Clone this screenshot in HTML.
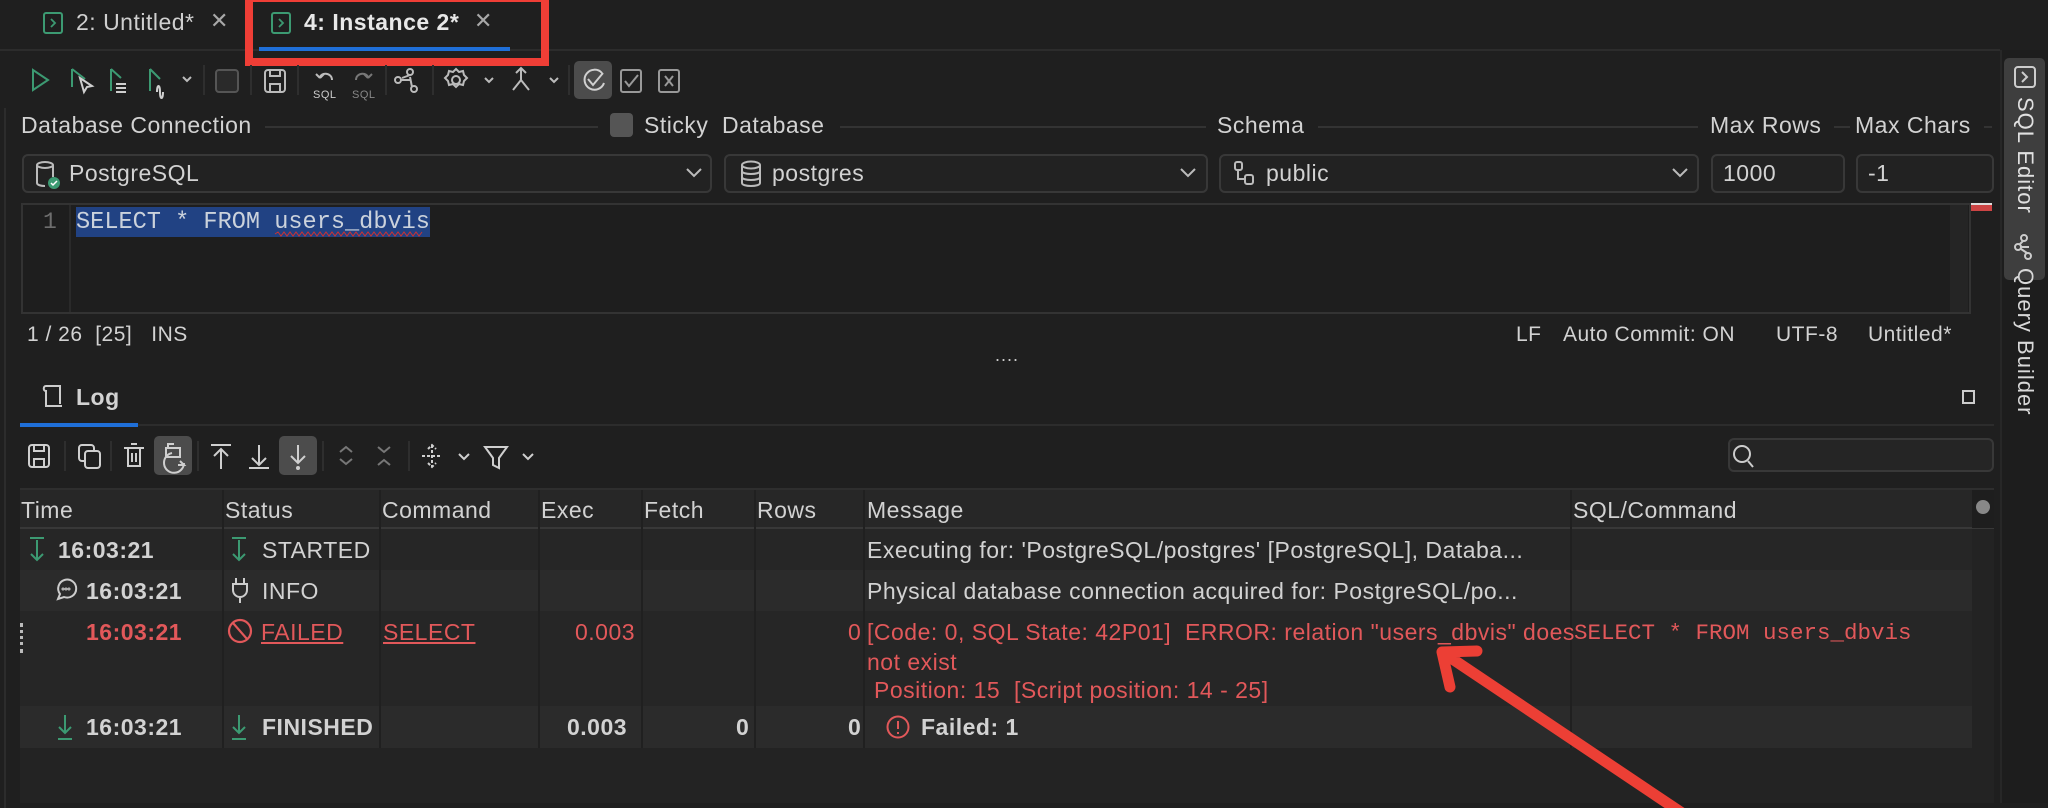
<!DOCTYPE html>
<html><head><meta charset="utf-8"><style>
*{margin:0;padding:0;box-sizing:border-box}
body{width:2048px;height:803px;background:#1f1f1f;overflow:hidden;position:relative;font-family:"Liberation Sans",sans-serif;color:#d2d2d2;font-size:23px;letter-spacing:0.5px}
.a{position:absolute;white-space:nowrap}
.mono{font-family:"Liberation Mono",monospace;letter-spacing:0}
svg{position:absolute;overflow:visible}
.b{font-weight:bold}
.red{color:#e2585a}
.u{text-decoration:underline}
.ln{position:absolute;height:2px;background:#333}
.box{position:absolute;border:2px solid #383838;border-radius:6px;background:#222}
.hl{position:absolute;background:#4c4c4c;border-radius:5px}
.sep{position:absolute;width:2px;height:30px;background:#2e2e2e}
</style></head><body>

<!-- tabs -->
<div class="ln" style="left:0;top:49px;width:2000px;background:#2c2c2c"></div>
<svg style="left:43px;top:12px" width="20" height="22"><rect x="1" y="1" width="18" height="20" rx="2" fill="none" stroke="#3c9a72" stroke-width="2"/><path d="M8 7l4 4-4 4" fill="none" stroke="#3c9a72" stroke-width="1.8"/></svg>
<div class="a" style="left:76px;top:9px;color:#cfcfcf">2: Untitled*</div>
<div class="a" style="left:210px;top:8px;font-size:22px;color:#a8a8a8">✕</div>
<svg style="left:271px;top:12px" width="20" height="22"><rect x="1" y="1" width="18" height="20" rx="2" fill="none" stroke="#3c9a72" stroke-width="2"/><path d="M8 7l4 4-4 4" fill="none" stroke="#3c9a72" stroke-width="1.8"/></svg>
<div class="a b" style="left:304px;top:9px;color:#e8e8e8">4: Instance 2*</div>
<div class="a" style="left:474px;top:8px;font-size:22px;color:#a8a8a8">✕</div>
<div class="a" style="left:259px;top:47px;width:251px;height:4px;background:#1f6fd8"></div>
<div class="a" style="left:245px;top:-6px;width:304px;height:72px;border:8px solid #ef3e36"></div>

<!-- toolbar -->
<svg style="left:0;top:60px" width="700" height="40" fill="none" stroke="#3c9a72" stroke-width="2">
<path d="M33 10v20l15-10z"/>
<path d="M72 9v18M72 9l13 10"/><path d="M80 18l4 14 3-5 5-1z" stroke="#cfcfcf"/>
<path d="M111 9v22M111 9l10 9"/><path d="M116 24h10M116 28h10M116 32h10" stroke="#cfcfcf"/>
<path d="M150 9v22M150 9l10 10"/><path d="M157 32c0-8 3-8 3 0s3 8 3 0" stroke="#cfcfcf"/>
<g stroke="#bbb"><path d="M183 17l4 4 4-4"/>
<rect x="216" y="10" width="22" height="22" rx="3" stroke="#555" fill="#2a2a2a"/>
<rect x="265" y="10" width="20" height="22" rx="3"/><path d="M270 10v6h10v-6M270 32v-8h10v8"/>
<path d="M320 18c0-6 12-6 12 2M320 18l-4-4M320 18l4-4"/><text x="313" y="38" font-size="11" fill="#ccc" stroke="none" font-family="Liberation Sans">SQL</text>
<g stroke="#777"><path d="M368 18c0-6-12-6-12 2M368 18l4-4M368 18l-4-4"/><text x="352" y="38" font-size="11" fill="#888" stroke="none" font-family="Liberation Sans">SQL</text></g>
<circle cx="410" cy="12" r="3"/><circle cx="398" cy="20" r="3"/><circle cx="414" cy="29" r="3"/><path d="M401 20h10M410 15l-8 3M412 27l-2-10"/>
<circle cx="456" cy="20" r="4"/><path d="M456 9l3 3 4-1 1 4 3 3-3 3-1 4-4-1-3 3-3-3-4 1-1-4-3-3 3-3 1-4 4 1z"/>
<path d="M485 18l4 4 4-4"/>
<path d="M521 8v12l-8 10M521 20l8 10M516 13l5-5 5 5"/>
<path d="M550 18l4 4 4-4"/></g>
</svg>
<div class="hl" style="left:574px;top:61px;width:38px;height:38px"></div>
<svg style="left:574px;top:61px" width="120" height="40" fill="none" stroke="#d0d0d0" stroke-width="2"><path d="M28 12a10 10 0 1 0 2 10"/><path d="M14 18l5 6 10-12"/>
<g stroke="#999"><rect x="47" y="9" width="20" height="22" rx="2"/><path d="M51 20l4 5 9-11"/><rect x="85" y="9" width="20" height="22" rx="2"/><path d="M91 15l8 10M99 15l-8 10"/></g></svg>
<div class="sep" style="left:203px;top:65px"></div><div class="sep" style="left:250px;top:65px"></div><div class="sep" style="left:297px;top:65px"></div><div class="sep" style="left:385px;top:65px"></div><div class="sep" style="left:432px;top:65px"></div><div class="sep" style="left:568px;top:65px"></div>

<div class="a" style="left:4px;top:108px;width:2px;height:700px;background:#2c2c2c"></div>

<!-- labels -->
<div class="a" style="left:21px;top:112px">Database Connection</div>
<div class="ln" style="left:265px;top:126px;width:333px"></div>
<div class="a" style="left:610px;top:113px;width:23px;height:24px;background:#555;border-radius:4px"></div>
<div class="a" style="left:644px;top:112px">Sticky</div>
<div class="a" style="left:722px;top:112px">Database</div>
<div class="ln" style="left:840px;top:126px;width:366px"></div>
<div class="a" style="left:1217px;top:112px">Schema</div>
<div class="ln" style="left:1318px;top:126px;width:380px"></div>
<div class="a" style="left:1710px;top:112px">Max Rows</div>
<div class="ln" style="left:1834px;top:126px;width:16px"></div>
<div class="a" style="left:1855px;top:112px">Max Chars</div>
<div class="ln" style="left:1984px;top:126px;width:8px"></div>

<!-- combos -->
<div class="box" style="left:22px;top:154px;width:690px;height:39px"></div>
<svg style="left:34px;top:160px" width="26" height="30" fill="none" stroke="#bbb" stroke-width="2"><ellipse cx="11" cy="5" rx="8" ry="3"/><path d="M3 5v18c0 2 4 3 8 3M19 5v12"/><circle cx="20" cy="23" r="6" fill="#3c9a72" stroke="none"/><path d="M17 23l2 2 4-4" stroke="#fff" stroke-width="1.5"/></svg>
<div class="a" style="left:69px;top:160px">PostgreSQL</div>
<svg style="left:686px;top:168px" width="16" height="10" fill="none" stroke="#bbb" stroke-width="2"><path d="M1 1l7 7 7-7"/></svg>
<div class="box" style="left:724px;top:154px;width:484px;height:39px"></div>
<svg style="left:740px;top:160px" width="22" height="28" fill="none" stroke="#bbb" stroke-width="2"><ellipse cx="11" cy="5" rx="9" ry="3.5"/><path d="M2 5v18c0 4 18 4 18 0V5M2 11c0 4 18 4 18 0M2 17c0 4 18 4 18 0"/></svg>
<div class="a" style="left:772px;top:160px">postgres</div>
<svg style="left:1180px;top:168px" width="16" height="10" fill="none" stroke="#bbb" stroke-width="2"><path d="M1 1l7 7 7-7"/></svg>
<div class="box" style="left:1219px;top:154px;width:480px;height:39px"></div>
<svg style="left:1233px;top:161px" width="24" height="26" fill="none" stroke="#bbb" stroke-width="2"><rect x="2" y="1" width="7" height="8" rx="2"/><rect x="12" y="14" width="8" height="9" rx="2"/><path d="M5 9v9h7"/></svg>
<div class="a" style="left:1266px;top:160px">public</div>
<svg style="left:1672px;top:168px" width="16" height="10" fill="none" stroke="#bbb" stroke-width="2"><path d="M1 1l7 7 7-7"/></svg>
<div class="box" style="left:1711px;top:154px;width:134px;height:39px"></div>
<div class="a" style="left:1723px;top:160px">1000</div>
<div class="box" style="left:1856px;top:154px;width:138px;height:39px"></div>
<div class="a" style="left:1868px;top:160px">-1</div>

<!-- editor -->
<div class="a" style="left:21px;top:203px;width:1950px;height:111px;border:2px solid #333;background:#1e1e1e"></div>
<div class="a" style="left:69px;top:205px;width:2px;height:107px;background:#2a2a2a"></div>
<div class="a" style="left:1950px;top:205px;width:18px;height:107px;background:#252525"></div>
<div class="a" style="left:1971px;top:203px;width:21px;height:8px;background:#c44;border-top:2px solid #ddd"></div>
<div class="a mono" style="left:43px;top:209px;font-size:23px;color:#6e6e6e">1</div>
<div class="a" style="left:76px;top:207px;width:354px;height:30px;background:#214283"></div>
<div class="a mono" style="left:76px;top:209px;font-size:23.6px;color:#cbd2dc">SELECT * FROM users_dbvis</div>
<svg style="left:275px;top:231px" width="155" height="6"><path d="M0 3l3-2 3 4 3-4 3 4 3-4 3 4 3-4 3 4 3-4 3 4 3-4 3 4 3-4 3 4 3-4 3 4 3-4 3 4 3-4 3 4 3-4 3 4 3-4 3 4 3-4 3 4 3-4 3 4 3-4 3 4 3-4 3 4 3-4 3 4 3-4 3 4 3-4 3 4 3-4 3 4 3-4 3 4 3-4 3 4 3-4 3 4 3-4 3 4 3-4" fill="none" stroke="#c33" stroke-width="1"/></svg>

<!-- status -->
<div class="a" style="left:27px;top:323px;font-size:21px">1 / 26 &nbsp;[25] &nbsp;&nbsp;INS</div>
<div class="a" style="left:1516px;top:323px;font-size:21px">LF</div>
<div class="a" style="left:1563px;top:323px;font-size:21px">Auto Commit: ON</div>
<div class="a" style="left:1776px;top:323px;font-size:21px">UTF-8</div>
<div class="a" style="left:1868px;top:323px;font-size:21px">Untitled*</div>
<div class="a" style="left:995px;top:345px;font-size:18px;letter-spacing:1px;color:#ccc">....</div>

<!-- right sidebar -->
<div class="a" style="left:2000px;top:50px;width:48px;height:753px;background:#1d1d1d;border-left:2px solid #272727"></div>
<div class="a" style="left:2004px;top:58px;width:41px;height:222px;background:#3e3e3e;border-radius:5px"></div>
<svg style="left:2014px;top:66px" width="22" height="22" fill="none" stroke="#ccc" stroke-width="2"><rect x="1" y="1" width="20" height="20" rx="3"/><path d="M8 6l5 5-5 5"/></svg>
<div class="a" style="left:2038px;top:97px;transform-origin:0 0;transform:rotate(90deg);font-size:22px;color:#e0e0e0;letter-spacing:1px">SQL Editor</div>
<svg style="left:2012px;top:234px" width="24" height="28" fill="none" stroke="#ccc" stroke-width="2"><circle cx="12" cy="4" r="3"/><circle cx="6" cy="13" r="3"/><circle cx="16" cy="22" r="3"/><path d="M9 13h8M11 7l-3 3M15 19l-6-4"/></svg>
<div class="a" style="left:2038px;top:268px;transform-origin:0 0;transform:rotate(90deg);font-size:22px;color:#d8d8d8;letter-spacing:1px">Query Builder</div>

<!-- log tab -->
<svg style="left:41px;top:383px" width="24" height="26" fill="none" stroke="#ccc" stroke-width="2"><path d="M5 3h14v18M5 3c-3 0-3 5 0 5v15h16"/></svg>
<div class="a b" style="left:76px;top:384px">Log</div>
<div class="a" style="left:20px;top:423px;width:118px;height:4px;background:#1f6fd8"></div>
<div class="ln" style="left:138px;top:424px;width:1856px;background:#2c2c2c"></div>
<div class="a" style="left:1962px;top:390px;width:13px;height:14px;border:2px solid #ccc"></div>

<!-- log toolbar -->
<div class="hl" style="left:154px;top:436px;width:38px;height:39px"></div>
<div class="hl" style="left:279px;top:436px;width:38px;height:39px"></div>
<svg style="left:0;top:435px" width="560" height="42" fill="none" stroke="#cfcfcf" stroke-width="2">
<rect x="29" y="10" width="20" height="22" rx="3"/><path d="M34 10v6h10v-6M34 32v-8h10v8"/>
<rect x="79" y="10" width="15" height="16" rx="3"/><rect x="85" y="16" width="15" height="17" rx="3" fill="#1f1f1f"/>
<path d="M124 13h20M128 13v18h12V13M131 9h6M132 18v9M136 18v9"/>
<path d="M172 18a10 10 0 1 0 12 10M166 13h14v9h-14zM168 13v-4h6M180 26l4 4-6 0"/>
<path d="M211 10h20M221 14v20M214 21l7-7 7 7"/>
<path d="M249 33h20M259 10v20M252 23l7 7 7-7"/>
<path d="M298 10v18M291 21l7 7 7-7"/><circle cx="298" cy="33" r="1" fill="#ddd"/>
<g stroke="#777"><path d="M340 17l6-5 6 5M340 24l6 5 6-5M378 12l6 5 6-5M378 30l6-5 6 5"/></g>
<path d="M422 21h20M432 10v22M428 14l4-4 4 4M428 28l4 4 4-4" stroke-dasharray="3 2"/>
<path d="M459 19l5 5 5-5M485 12h22l-8 11v10l-6-3v-7zM523 19l5 5 5-5"/>
</svg>
<div class="sep" style="left:64px;top:441px"></div><div class="sep" style="left:110px;top:441px"></div><div class="sep" style="left:197px;top:441px"></div><div class="sep" style="left:322px;top:441px"></div><div class="sep" style="left:408px;top:441px"></div>
<div class="box" style="left:1728px;top:438px;width:266px;height:34px;background:#252525"></div>
<svg style="left:1732px;top:444px" width="24" height="26" fill="none" stroke="#ccc" stroke-width="2"><circle cx="10" cy="10" r="8"/><path d="M16 17l5 6"/></svg>

<!-- table -->
<div class="a" style="left:20px;top:488px;width:1974px;height:315px;background:#232323"></div>
<div class="a" style="left:20px;top:488px;width:1974px;height:41px;background:#272727;border-bottom:2px solid #383838;border-top:2px solid #2e2e2e"></div>
<div class="a" style="left:20px;top:529px;width:1952px;height:41px;background:#262626"></div>
<div class="a" style="left:20px;top:570px;width:1952px;height:41px;background:#2b2b2b"></div>
<div class="a" style="left:20px;top:611px;width:1952px;height:95px;background:#262626"></div>
<div class="a" style="left:20px;top:706px;width:1952px;height:42px;background:#2b2b2b"></div>
<div class="a" style="left:1972px;top:490px;width:22px;height:38px;background:#1e1e1e"></div>
<div class="a" style="left:1976px;top:500px;width:14px;height:14px;border-radius:50%;background:#888"></div>
<div class="a" style="left:222px;top:490px;width:2px;height:258px;background:#202020"></div>
<div class="a" style="left:379px;top:490px;width:2px;height:258px;background:#202020"></div>
<div class="a" style="left:538px;top:490px;width:2px;height:258px;background:#202020"></div>
<div class="a" style="left:641px;top:490px;width:2px;height:258px;background:#202020"></div>
<div class="a" style="left:754px;top:490px;width:2px;height:258px;background:#202020"></div>
<div class="a" style="left:863px;top:490px;width:2px;height:258px;background:#202020"></div>
<div class="a" style="left:1570px;top:490px;width:2px;height:258px;background:#202020"></div>

<div class="a" style="left:21px;top:497px">Time</div>
<div class="a" style="left:225px;top:497px">Status</div>
<div class="a" style="left:382px;top:497px">Command</div>
<div class="a" style="left:541px;top:497px">Exec</div>
<div class="a" style="left:644px;top:497px">Fetch</div>
<div class="a" style="left:757px;top:497px">Rows</div>
<div class="a" style="left:867px;top:497px">Message</div>
<div class="a" style="left:1573px;top:497px">SQL/Command</div>

<!-- row1 -->
<svg style="left:28px;top:536px" width="18" height="26" fill="none" stroke="#3c9a72" stroke-width="2"><path d="M2 2h14M9 4v20M3 18l6 6 6-6"/></svg>
<div class="a b" style="left:58px;top:537px">16:03:21</div>
<svg style="left:230px;top:536px" width="18" height="26" fill="none" stroke="#3c9a72" stroke-width="2"><path d="M2 2h14M9 4v20M3 18l6 6 6-6"/></svg>
<div class="a" style="left:262px;top:537px">STARTED</div>
<div class="a" style="left:867px;top:537px">Executing for: 'PostgreSQL/postgres' [PostgreSQL], Databa...</div>
<!-- row2 -->
<svg style="left:53px;top:578px" width="26" height="26" fill="none" stroke="#ccc" stroke-width="2"><path d="M5 21l2-5a9 9 0 1 1 4 3z"/><circle cx="10" cy="11" r=".5"/><circle cx="13" cy="11" r=".5"/><circle cx="16" cy="11" r=".5"/></svg>
<div class="a b" style="left:86px;top:578px">16:03:21</div>
<svg style="left:230px;top:576px" width="20" height="28" fill="none" stroke="#ccc" stroke-width="2"><path d="M6 2v6M14 2v6M3 8h14v6a7 7 0 0 1-14 0zM10 21v6"/></svg>
<div class="a" style="left:262px;top:578px">INFO</div>
<div class="a" style="left:867px;top:578px">Physical database connection acquired for: PostgreSQL/po...</div>
<!-- row3 -->
<div class="a b red" style="left:86px;top:619px">16:03:21</div>
<svg style="left:227px;top:617px" width="26" height="28" fill="none" stroke="#e2585a" stroke-width="2.2"><circle cx="13" cy="14" r="11"/><path d="M6 6l14 16"/></svg>
<div class="a red u" style="left:261px;top:619px">FAILED</div>
<div class="a red u" style="left:383px;top:619px">SELECT</div>
<div class="a red" style="left:575px;top:619px">0.003</div>
<div class="a red" style="left:848px;top:619px">0</div>
<div class="a red" style="left:867px;top:619px">[Code: 0, SQL State: 42P01] &nbsp;ERROR: relation "users_dbvis" does</div>
<div class="a red" style="left:867px;top:649px">not exist</div>
<div class="a red" style="left:874px;top:677px">Position: 15 &nbsp;[Script position: 14 - 25]</div>
<div class="a mono red" style="left:1574px;top:620px;font-size:22.5px">SELECT * FROM users_dbvis</div>
<!-- row4 -->
<svg style="left:56px;top:713px" width="18" height="28" fill="none" stroke="#3c9a72" stroke-width="2"><path d="M9 2v18M3 14l6 6 6-6M2 26h14"/></svg>
<div class="a b" style="left:86px;top:714px">16:03:21</div>
<svg style="left:230px;top:713px" width="18" height="28" fill="none" stroke="#3c9a72" stroke-width="2"><path d="M9 2v18M3 14l6 6 6-6M2 26h14"/></svg>
<div class="a b" style="left:262px;top:714px">FINISHED</div>
<div class="a b" style="left:567px;top:714px">0.003</div>
<div class="a b" style="left:736px;top:714px">0</div>
<div class="a b" style="left:848px;top:714px">0</div>
<svg style="left:886px;top:714px" width="26" height="28" fill="none" stroke="#e2585a" stroke-width="2"><circle cx="12" cy="13" r="10.5"/><path d="M12 7v8M12 18v2"/></svg>
<div class="a b" style="left:921px;top:714px">Failed: 1</div>

<div class="a" style="left:20px;top:623px;width:5px;height:30px;border-left:3px dotted #bbb"></div>

<!-- arrow -->
<svg style="left:0;top:0" width="2048" height="803" fill="none" stroke="#ec3f35" stroke-width="11" stroke-linecap="round" stroke-linejoin="round"><path d="M1685 815L1442 652M1442 652l35 -1M1442 652l8 35"/></svg>
</body></html>
